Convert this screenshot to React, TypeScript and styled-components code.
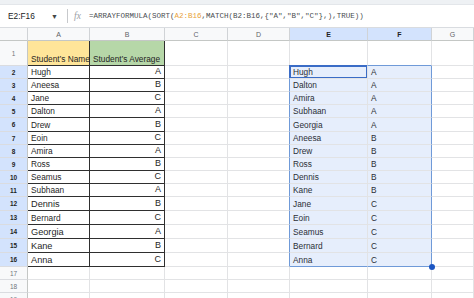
import React from "react";
import styled, { createGlobalStyle } from "styled-components";

const GlobalStyle = createGlobalStyle`
  body {
    margin: 0;
    background: #ffffff;
    font-family: "Liberation Sans", Arial, sans-serif;
    overflow: hidden;
  }
`;

const COLS = ["", "A", "B", "C", "D", "E", "F", "G"];
const COL_WIDTHS = [28, 62, 75, 63, 62, 78, 64, 42];
const ROW_HEIGHTS = [25, 13, 13, 13, 13, 14, 13, 13, 13, 13, 13, 14, 14, 14, 14, 14, 13, 13, 13];

const students = [
  ["Hugh", "A"], ["Aneesa", "B"], ["Jane", "C"], ["Dalton", "A"], ["Drew", "B"],
  ["Eoin", "C"], ["Amira", "A"], ["Ross", "B"], ["Seamus", "C"], ["Subhaan", "A"],
  ["Dennis", "B"], ["Bernard", "C"], ["Georgia", "A"], ["Kane", "B"], ["Anna", "C"],
];
const bigNames = ["Dennis", "Georgia", "Kane", "Anna"];
const order = { A: 0, B: 1, C: 2 } as Record<string, number>;
const sorted = students
  .map((s, i) => ({ s, i }))
  .sort((a, b) => order[a.s[1]] - order[b.s[1]] || a.i - b.i)
  .map((x) => x.s);

const Page = styled.div`
  width: 474px;
  height: 298px;
  overflow: hidden;
`;

const TopStrip = styled.div`
  height: 4px;
  background: #eef1f4;
  border-bottom: 1px solid #e3e6ea;
`;

const FormulaBar = styled.div`
  height: 22px;
  display: flex;
  align-items: center;
  border-bottom: 1px solid #d9dce0;
  color: #202124;
`;

const NameBox = styled.div`
  width: 60px;
  padding-left: 8px;
  display: flex;
  align-items: center;
  justify-content: space-between;
  font-size: 8.3px;
  box-sizing: border-box;
`;

const Caret = styled.span`
  font-size: 7px;
  color: #444746;
  margin-right: 2px;
`;

const Divider = styled.div`
  width: 1px;
  height: 14px;
  background: #c7c9cc;
  margin: 0 6px 0 7px;
`;

const Fx = styled.span`
  font-family: "Liberation Serif", serif;
  font-style: italic;
  font-size: 9.5px;
  color: #9aa0a6;
  width: 15px;
`;

const Formula = styled.div`
  font-family: "Liberation Mono", monospace;
  font-size: 7.5px;
  color: #4a4d51;
  white-space: nowrap;
`;

const Ref = styled.span<{ $color: string }>`
  color: ${(p) => p.$color};
`;

const Grid = styled.div`
  display: grid;
  grid-template-columns: ${COL_WIDTHS.map((w) => w + "px").join(" ")};
  grid-template-rows: 13px ${ROW_HEIGHTS.map((h) => h + "px").join(" ")};
`;

const ColHeader = styled.div<{ $selected: boolean }>`
  box-sizing: border-box;
  display: flex;
  align-items: center;
  justify-content: center;
  font-size: 7px;
  background: ${(p) => (p.$selected ? "#d3e3fd" : "#f8f9fa")};
  color: ${(p) => (p.$selected ? "#1f1f1f" : "#5f6368")};
  font-weight: ${(p) => (p.$selected ? 700 : 400)};
  border-right: 1px solid #d0d3d6;
  border-bottom: 1px solid #c4c7c5;
`;

const RowHeader = styled.div<{ $selected: boolean }>`
  box-sizing: border-box;
  display: flex;
  align-items: center;
  justify-content: center;
  font-size: 6.5px;
  background: ${(p) => (p.$selected ? "#d3e3fd" : "#f8f9fa")};
  color: ${(p) => (p.$selected ? "#1f1f1f" : "#70757a")};
  font-weight: ${(p) => (p.$selected ? 700 : 400)};
  border-right: 1px solid #c4c7c5;
  border-bottom: 1px solid #dadce0;
`;

type CellProps = {
  $fill?: string;
  $right?: string;
  $bottom?: string;
  $align?: "left" | "right";
  $size?: number;
  $color?: string;
  $active?: boolean;
};

const Cell = styled.div<CellProps>`
  position: relative;
  box-sizing: border-box;
  display: flex;
  align-items: flex-end;
  justify-content: ${(p) => (p.$align === "right" ? "flex-end" : "flex-start")};
  padding: 0 3px 1px 3px;
  font-size: ${(p) => p.$size ?? 8.3}px;
  line-height: 1.1;
  color: ${(p) => p.$color ?? "#1f1f1f"};
  white-space: nowrap;
  background: ${(p) => p.$fill ?? "#ffffff"};
  border-right: 1px solid ${(p) => p.$right ?? "#e2e3e5"};
  border-bottom: 1px solid ${(p) => p.$bottom ?? "#e2e3e5"};
  box-shadow: ${(p) => (p.$active ? "inset 0 0 0 1px #3a6cc6, -1px -1px 0 0 #3a6cc6" : "none")};
`;

const Handle = styled.span`
  position: absolute;
  right: -4px;
  bottom: -4px;
  width: 6px;
  height: 6px;
  border-radius: 50%;
  background: #1b55c2;
  z-index: 2;
`;

const DARK = "#2f2f2f";
const BLUE = "#6f9ad8";
const SEL_FILL = "#e6eefc";

function renderCell(row: number, col: number) {
  const key = `${row}-${col}`;
  const inTable = (col === 1 || col === 2) && row <= 16;
  const inSel = (col === 5 || col === 6) && row >= 2 && row <= 16;

  const props: CellProps = {};
  if (inTable) {
    props.$right = DARK;
    props.$bottom = DARK;
  }
  if (col === 4 && row >= 2 && row <= 16) props.$right = BLUE;
  if (col === 6 && row >= 2 && row <= 16) props.$right = BLUE;
  if ((col === 5 || col === 6) && (row === 1 || row === 16)) props.$bottom = BLUE;
  if (inSel) props.$fill = SEL_FILL;

  let content: React.ReactNode = null;

  if (row === 1 && col === 1) {
    props.$fill = "#ffe599";
    content = "Student’s Name";
  } else if (row === 1 && col === 2) {
    props.$fill = "#b6d7a8";
    content = "Student’s Average";
  } else if (row >= 2 && row <= 16 && col === 1) {
    const name = students[row - 2][0];
    if (bigNames.includes(name)) props.$size = 9.2;
    content = name;
  } else if (row >= 2 && row <= 16 && col === 2) {
    props.$align = "right";
    props.$size = 9;
    content = students[row - 2][1];
  } else if (inSel) {
    const [name, grade] = sorted[row - 2];
    props.$color = "#2b2f36";
    content = col === 5 ? name : grade;
    if (col === 5 && row === 2) props.$active = true;
  }

  return (
    <Cell key={key} {...props}>
      {content}
      {col === 6 && row === 16 && <Handle />}
    </Cell>
  );
}

export default function App() {
  return (
    <Page>
      <GlobalStyle />
      <TopStrip />
      <FormulaBar>
        <NameBox>
          E2:F16
          <Caret>▼</Caret>
        </NameBox>
        <Divider />
        <Fx>fx</Fx>
        <Formula>
          =ARRAYFORMULA(SORT(<Ref $color="#e8a23a">A2:B16</Ref>,MATCH(
          <Ref $color="#4a4d51">B2:B16</Ref>,{"{"}"A","B","C"{"}"},),TRUE))
        </Formula>
      </FormulaBar>
      <Grid>
        {COLS.map((c, i) => (
          <ColHeader key={"h" + i} $selected={c === "E" || c === "F"}>
            {c}
          </ColHeader>
        ))}
        {ROW_HEIGHTS.map((_, ri) => {
          const row = ri + 1;
          return (
            <React.Fragment key={"r" + row}>
              <RowHeader $selected={row >= 2 && row <= 16}>{row}</RowHeader>
              {COLS.slice(1).map((_, ci) => renderCell(row, ci + 1))}
            </React.Fragment>
          );
        })}
      </Grid>
    </Page>
  );
}
